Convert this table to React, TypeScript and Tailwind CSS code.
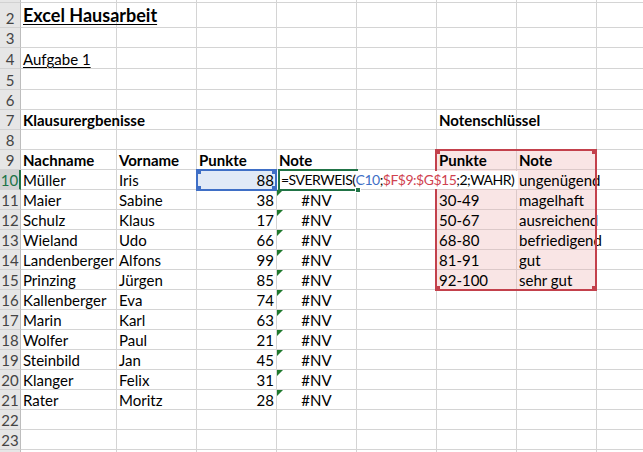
import React from "react";

type Cell = { t: string; b?: boolean; u?: boolean; r?: boolean; c?: boolean; big?: boolean };

const COLS = ["A", "B", "C", "D", "E", "F", "G", "H"];
const COL_W = ["w-[96px]", "w-[80px]", "w-[80px]", "w-[80px]", "w-[80px]", "w-[80px]", "w-[80px]", "w-[80px]"];

const ROW_H: Record<number, string> = {
  1: "h-[3px]",
  2: "h-[25px]",
  4: "h-[21px]",
  5: "h-[21px]",
};

const students: [string, string, number][] = [
  ["Müller", "Iris", 88],
  ["Maier", "Sabine", 38],
  ["Schulz", "Klaus", 17],
  ["Wieland", "Udo", 66],
  ["Landenberger", "Alfons", 99],
  ["Prinzing", "Jürgen", 85],
  ["Kallenberger", "Eva", 74],
  ["Marin", "Karl", 63],
  ["Wolfer", "Paul", 21],
  ["Steinbild", "Jan", 45],
  ["Klanger", "Felix", 31],
  ["Rater", "Moritz", 28],
];

const key: [string, string][] = [
  ["", "ungenügend"],
  ["30-49", "magelhaft"],
  ["50-67", "ausreichend"],
  ["68-80", "befriedigend"],
  ["81-91", "gut"],
  ["92-100", "sehr gut"],
];

const cells: Record<string, Cell> = {
  A2: { t: "Excel Hausarbeit", b: true, u: true, big: true },
  A4: { t: "Aufgabe 1", u: true },
  A7: { t: "Klausurergbenisse", b: true },
  F7: { t: "Notenschlüssel", b: true },
  A9: { t: "Nachname", b: true },
  B9: { t: "Vorname", b: true },
  C9: { t: "Punkte", b: true },
  D9: { t: "Note", b: true },
  F9: { t: "Punkte", b: true },
  G9: { t: "Note", b: true },
};

students.forEach(([last, first, pts], i) => {
  const row = 10 + i;
  cells["A" + row] = { t: last };
  cells["B" + row] = { t: first };
  cells["C" + row] = { t: String(pts), r: true };
  if (row > 10) cells["D" + row] = { t: "#NV", c: true };
});

key.forEach(([range, note], i) => {
  const row = 10 + i;
  if (range) cells["F" + row] = { t: range };
  cells["G" + row] = { t: note };
});

function inPink(col: string, row: number) {
  return (col === "F" || col === "G") && row >= 9 && row <= 15;
}

// kleine Eckquadrate der Bezugsrahmen
function Corners({ color }: { color: string }) {
  return (
    <>
      <div className={"absolute -left-[2px] -top-[2px] w-[5px] h-[5px] " + color} />
      <div className={"absolute -right-[2px] -top-[2px] w-[5px] h-[5px] " + color} />
      <div className={"absolute -left-[2px] -bottom-[2px] w-[5px] h-[5px] " + color} />
      <div className={"absolute -right-[2px] -bottom-[2px] w-[5px] h-[5px] " + color} />
    </>
  );
}

function Overlay({ id }: { id: string }) {
  if (id === "F9") {
    return (
      <div className="absolute -left-[2px] -top-[1px] w-[162px] h-[142px] border-2 border-[#c3414c] z-10">
        <Corners color="bg-[#c3414c]" />
      </div>
    );
  }
  if (id === "C10") {
    return (
      <div className="absolute -left-[1px] -top-[1px] w-[81px] h-[22px] border-2 border-[#3f6fc6] z-10">
        <Corners color="bg-[#3f6fc6]" />
      </div>
    );
  }
  if (id === "D10") {
    return (
      <div className="absolute left-[1px] -top-[1px] w-[80px] h-[22px] border-y-2 border-l-2 border-[#217346] z-20">
        <div className="absolute left-0 top-0 w-[238px] h-[18px] bg-white flex items-end leading-[18px] whitespace-nowrap text-[14px] tracking-[-0.5px] pl-[1px]">
          <span>=SVERWEIS(</span>
          <span className="text-[#3f6fc6]">C10</span>
          <span>;</span>
          <span className="text-[#d0424f]">$F$9:$G$15</span>
          <span>;2;WAHR)</span>
        </div>
        <div className="absolute -right-[3px] -bottom-[4px] w-[6px] h-[6px] bg-[#217346] border border-white" />
      </div>
    );
  }
  return null;
}

export default function App() {
  const rows = Array.from({ length: 24 }, (_, i) => i + 1);

  return (
    <div className="w-[643px] h-[452px] overflow-hidden bg-white font-['Lato','Open_Sans',sans-serif] text-[15px] text-black">
      {rows.map((row) => (
        <div key={row} className={"flex " + (ROW_H[row] ?? "h-[20px]")}>
          {/* Zeilenkopf */}
          <div
            className={
              "shrink-0 w-[21px] h-full flex items-end justify-center leading-[18px] text-[15px] border-b border-[#d2d2d2] " +
              (row === 10
                ? "bg-[#d2d2d2] text-[#217346] border-r-2 border-r-[#217346]"
                : "bg-[#e6e6e6] text-[#444] border-r border-r-[#bdbdbd]")
            }
          >
            {row > 1 && row < 24 ? row : null}
          </div>

          {COLS.map((col, ci) => {
            const id = col + row;
            const cell = cells[id];
            const pink = inPink(col, row);
            const blue = id === "C10";
            return (
              <div
                key={col}
                className={
                  "relative shrink-0 h-full border-r border-b whitespace-nowrap flex items-end px-[2px] " +
                  COL_W[ci] +
                  (pink ? " bg-[#f9e5e5] border-[#dcc9c9]" : blue ? " bg-[#e1eaf7] border-[#d4d4d4]" : " border-[#d4d4d4]") +
                  (cell?.r ? " justify-end" : cell?.c ? " justify-center" : "")
                }
              >
                {col === "D" && row > 10 && row < 22 && (
                  <svg className="absolute left-0 top-0" width="6" height="6" viewBox="0 0 6 6">
                    <polygon points="0,0 6,0 0,6" fill="#1f7a2e" />
                  </svg>
                )}
                {cell && (
                  <span
                    className={
                      (cell.big ? "text-[18px] leading-[22px] pb-[1px] " : "leading-[18px] ") +
                      (cell.b ? "font-bold " : "") +
                      (cell.u ? "underline underline-offset-[2px] " : "")
                    }
                  >
                    {cell.t}
                  </span>
                )}
                <Overlay id={id} />
              </div>
            );
          })}
        </div>
      ))}
    </div>
  );
}
